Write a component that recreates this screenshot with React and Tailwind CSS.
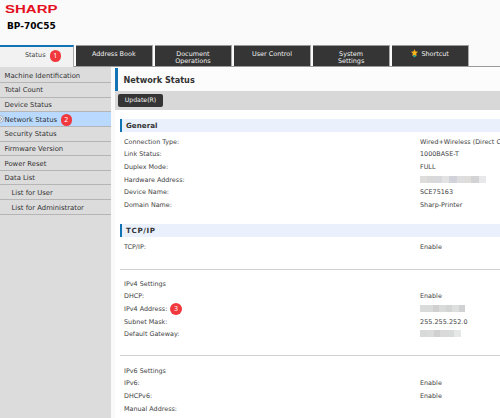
import { clsx } from 'clsx';

const tabs = [
  { id: 'address', lines: ['Address Book'] },
  { id: 'document', lines: ['Document', 'Operations'] },
  { id: 'user', lines: ['User Control'] },
  { id: 'system', lines: ['System', 'Settings'] },
  { id: 'shortcut', lines: ['Shortcut'], star: true }
];

const menuItems = [
  { label: 'Machine Identification' },
  { label: 'Total Count' },
  { label: 'Device Status' },
  { label: 'Network Status', active: true, badge: 2 },
  { label: 'Security Status' },
  { label: 'Firmware Version' },
  { label: 'Power Reset' },
  { label: 'Data List' },
  { label: 'List for User', nested: true },
  { label: 'List for Administrator', nested: true }
];

const generalRows = [
  { label: 'Connection Type:', value: 'Wired+Wireless (Direct Connection)' },
  { label: 'Link Status:', value: '1000BASE-T' },
  { label: 'Duplex Mode:', value: 'FULL' },
  {
    label: 'Hardware Address:',
    mask: ['#dedddc', '#dad9da', '#d8d9dc', '#e3e3e3', '#d0d3da', '#dedee0', '#dfdcdb', '#d3d3d6', '#e8e8ea'],
    maskClass: 'w-[66px]'
  },
  { label: 'Device Name:', value: 'SCE75163' },
  { label: 'Domain Name:', value: 'Sharp-Printer' }
];

const ipv4Rows = [
  { label: 'IPv4 Settings' },
  { label: 'DHCP:', value: 'Enable' },
  {
    label: 'IPv4 Address:',
    badge: 3,
    mask: ['#d9dbdb', '#d9dbda', '#d1d0d0', '#d9dbdb', '#d2d5d4', '#dcdfdd', '#cfd1d2'],
    maskClass: 'w-[45px]'
  },
  { label: 'Subnet Mask:', value: '255.255.252.0', valueClass: 'tracking-[0.05px]' },
  {
    label: 'Default Gateway:',
    mask: ['#d8dad9', '#dadcdb', '#d1d0d1', '#d9d9da', '#d7dbd9', '#e6e8e7'],
    maskClass: 'w-[41px]'
  }
];

const ipv6Rows = [
  { label: 'IPv6 Settings' },
  { label: 'IPv6:', value: 'Enable' },
  { label: 'DHCPv6:', value: 'Enable' },
  { label: 'Manual Address:' },
  { label: 'Default Gateway:' }
];

const Badge = ({ children, className }) => (
  <span
    className={clsx(
      'inline-flex size-[11.5px] shrink-0 items-center justify-center rounded-full bg-[#f0383d] font-sans text-[7px] leading-none text-white',
      className
    )}
  >
    {children}
  </span>
);

const StarIcon = () => (
  <svg className="mr-[3px] h-[9px] w-[7px]" viewBox="0 0 14 18">
    <path d="M4 10h6v5l-3 2-3-2z" fill="#2b9a8c" />
    <path d="M7 0l2 5 5 .5-3.6 3.7L11.500 14 7 11.500 2.500 14l1.100-4.800L0 5.500 5 5z" fill="#f9b219" />
  </svg>
);

const Row = ({ label, value, valueClass, badge, mask, maskClass }) => (
  <div className="flex h-[12.6px] items-center whitespace-nowrap">
    <div className="flex w-[296px] shrink-0 items-center">
      {label}
      {badge && <Badge className="-my-1 ml-[3px]">{badge}</Badge>}
    </div>
    {value && <div className={valueClass}>{value}</div>}
    {mask && (
      <div className={clsx('-mt-px flex h-[7px] shrink-0', maskClass)}>
        {mask.map((color, i) => (
          <div key={i} className="flex-1" style={{ backgroundColor: color }} />
        ))}
      </div>
    )}
  </div>
);

const SectionTitle = ({ children, className }) => (
  <h2
    className={clsx(
      'flex h-[12.5px] items-center border-l-[2.500px] border-[#1273b5] bg-[#eaf1fd] pt-px pl-1 text-[7.150px] font-bold text-[#333]',
      className
    )}
  >
    {children}
  </h2>
);

const Header = () => (
  <header className="flex h-[45px] flex-col pt-[5px]">
    <svg className="ml-[5px] h-[9px] w-[53px]" viewBox="0 0 53 9">
      <text
        x="0"
        y="8.3"
        textLength="52.5"
        lengthAdjust="spacingAndGlyphs"
        fontFamily="Liberation Sans, sans-serif"
        fontWeight="700"
        fontSize="10.3"
        fill="#e5101f"
      >
        SHARP
      </text>
    </svg>
    <h1 className="mt-[6px] ml-[7px] text-[9px] leading-3 font-bold text-black">BP-70C55</h1>
  </header>
);

const TabBar = () => (
  <nav className="flex h-[22px] items-stretch gap-[1.500px] border-b border-[#999] text-[6.450px] leading-[6.500px]">
    <div className="-mb-px flex w-[74px] shrink-0 gap-[5px] border-t-2 border-r border-t-[#1273b5] border-r-[#aaa] bg-[#f2f2f2] pt-[5px] pl-[25px] text-[#444]">
      <span className="w-[20.5px]">Status</span>
      <Badge className="mt-[-2px] -ml-[1px]">1</Badge>
    </div>
    {tabs.map((tab) => (
      <div
        key={tab.id}
        className="flex w-[77.6px] shrink-0 justify-center border-t border-r border-t-[#999] border-r-[#aaa] bg-[#353535] pt-[5px] text-center text-[#f0f0f0]"
      >
        {tab.star && <span className="-mt-[2px]"><StarIcon /></span>}
        <div>
          {tab.lines.map((line) => (
            <div key={line}>{line}</div>
          ))}
        </div>
      </div>
    ))}
  </nav>
);

const Sidebar = () => (
  <aside className="w-[110.5px] shrink-0 bg-[#dcdcdc] pt-[1.300px] text-[6.850px] text-[#333]">
    {menuItems.map((item) => (
      <div
        key={item.label}
        className={clsx(
          'relative flex h-[14.65px] items-center border-b border-[#b5b5b5] pt-[1.5px] whitespace-nowrap',
          item.nested ? 'pl-[11.5px]' : 'pl-[4.5px]',
          item.active && 'bg-[#b9dafe]'
        )}
      >
        {item.active && (
          <svg className="absolute top-[3px] -left-[4px] size-[8px]" viewBox="0 0 8 8">
            <circle cx="4" cy="4" r="3.4" fill="#eef3f8" stroke="#8795a5" strokeWidth="0.7" />
            <path d="M4.200 2.500L5.800 4 4.200 5.500" fill="none" stroke="#68717d" strokeWidth="0.8" />
          </svg>
        )}
        {item.label}
        {item.badge && <Badge className="ml-[3.5px]">{item.badge}</Badge>}
      </div>
    ))}
  </aside>
);

const Content = () => (
  <main className="ml-[4.5px] min-w-0 flex-1 overflow-hidden bg-white pt-px">
    <div className="flex h-[23px] items-center border-l-[3px] border-[#1273b5] bg-[#fcfcfc] pt-px pl-[5.5px] text-[8.150px] font-bold text-[#333]">
      Network Status
    </div>
    <div className="flex h-[19px] items-center bg-[#d8d8d8] pl-[3px]">
      <button className="h-[13px] w-[45px] rounded-[2px] bg-[#353535] text-[6.200px] leading-none text-[#f5f5f5]">
        Update(R)
      </button>
    </div>

    <div className="mt-[9px] ml-[5px] text-[6.420px] leading-[8px] text-[#444]">
      <SectionTitle>General</SectionTitle>
      <div className="mt-[4px] pl-[4px]">
        {generalRows.map((row) => (
          <Row key={row.label} {...row} />
        ))}
      </div>

      <div className="mt-[13px]">
        <SectionTitle className="tracking-[0.65px]">TCP/IP</SectionTitle>
      </div>
      <div className="mt-[4px] pl-[4px]">
        <Row label="TCP/IP:" value="Enable" />
      </div>

      <hr className="mt-[15.5px] border-t border-[#d0d0d0]" />
      <div className="mt-[7.8px] pl-[4px]">
        {ipv4Rows.map((row) => (
          <Row key={row.label} {...row} />
        ))}
      </div>

      <hr className="mt-[15px] border-t border-[#d0d0d0]" />
      <div className="mt-[8px] pl-[4px]">
        {ipv6Rows.map((row) => (
          <Row key={row.label} {...row} />
        ))}
      </div>
    </div>
  </main>
);

const App = () => (
  <div className="flex h-screen w-full flex-col overflow-hidden bg-[#fafafa] font-['DejaVu_Sans',sans-serif]">
    <Header />
    <TabBar />
    <div className="flex min-h-0 flex-1">
      <Sidebar />
      <Content />
    </div>
  </div>
);

export default App;
